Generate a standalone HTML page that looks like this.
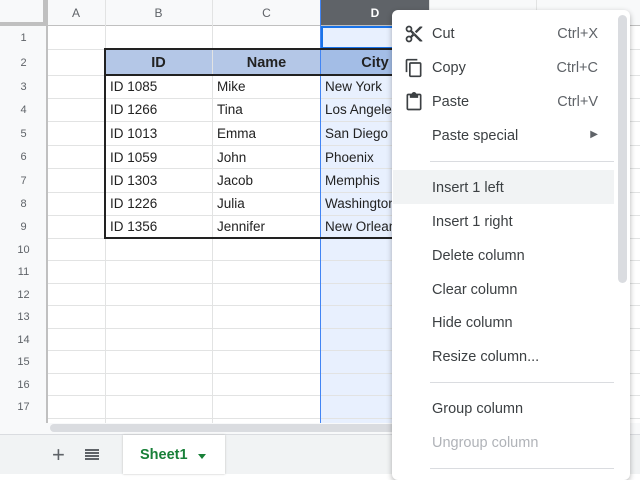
<!DOCTYPE html><html><head><style>
*{margin:0;padding:0;box-sizing:border-box}
body{width:640px;height:474px;overflow:hidden;background:#fff;font-family:"Liberation Sans",Arial,sans-serif;position:relative}
.a{position:absolute}
.hl{position:absolute;left:0;width:640px;height:1px;background:#e2e3e3}
.vl{position:absolute;top:0;width:1px;height:423px;background:#e2e3e3}
.rh{position:absolute;left:0;width:47px;background:#f8f9fa;color:#5f6368;font-size:11px;text-align:center}
.ch{position:absolute;top:0;height:26px;background:#f8f9fa;color:#5f6368;font-size:12px;text-align:center;line-height:26px}
.c{position:absolute;font-size:13.5px;color:#222;white-space:nowrap;overflow:hidden}
.mi{position:absolute;left:432px;font-size:14.5px;color:#3c4043}
.sc{position:absolute;right:42px;font-size:14.5px;color:#5f6368}
</style></head><body>
<div class="a" style="left:321px;top:26px;width:108px;height:397px;background:#e8f0fe"></div>
<div class="a" style="left:105px;top:49px;width:324px;height:26px;background:#b4c7e7"></div>
<div class="a" style="left:321px;top:49px;width:108px;height:26px;background:#a3bde6"></div>
<div class="a" style="left:0;top:0;width:47px;height:26px;background:#f8f9fa;border-right:4px solid #c0c0c0;border-bottom:4px solid #c0c0c0"></div>
<div class="ch" style="left:47px;width:58px">A</div>
<div class="ch" style="left:105px;width:107px">B</div>
<div class="ch" style="left:212px;width:109px">C</div>
<div class="ch" style="left:321px;width:108px;background:#5f6368;color:#fff;font-weight:bold">D</div>
<div class="ch" style="left:429px;width:211px"></div>
<div class="rh" style="top:26px;height:397px;border-right:1px solid #c0c0c0"></div>
<div class="hl" style="top:25px;background:#c0c0c0"></div>
<div class="hl" style="top:49px"></div><div class="hl" style="top:75px"></div><div class="hl" style="top:98px"></div><div class="hl" style="top:121px"></div><div class="hl" style="top:145px"></div><div class="hl" style="top:168px"></div><div class="hl" style="top:192px"></div><div class="hl" style="top:215px"></div><div class="hl" style="top:238px"></div><div class="hl" style="top:260px"></div><div class="hl" style="top:283px"></div><div class="hl" style="top:305px"></div><div class="hl" style="top:328px"></div><div class="hl" style="top:350px"></div><div class="hl" style="top:373px"></div><div class="hl" style="top:395px"></div><div class="hl" style="top:418px"></div>
<div class="vl" style="left:47px;background:#c0c0c0"></div><div class="vl" style="left:105px"></div><div class="vl" style="left:212px"></div><div class="vl" style="left:320px;background:#4285f4"></div><div class="vl" style="left:429px"></div><div class="vl" style="left:536px"></div>
<div class="rh" style="top:27px;line-height:23px">1</div>
<div class="rh" style="top:50px;line-height:26px">2</div>
<div class="rh" style="top:76px;line-height:23px">3</div>
<div class="rh" style="top:99px;line-height:23px">4</div>
<div class="rh" style="top:122px;line-height:24px">5</div>
<div class="rh" style="top:146px;line-height:23px">6</div>
<div class="rh" style="top:169px;line-height:24px">7</div>
<div class="rh" style="top:193px;line-height:23px">8</div>
<div class="rh" style="top:216px;line-height:23px">9</div>
<div class="rh" style="top:239px;line-height:22px">10</div>
<div class="rh" style="top:261px;line-height:23px">11</div>
<div class="rh" style="top:284px;line-height:22px">12</div>
<div class="rh" style="top:306px;line-height:23px">13</div>
<div class="rh" style="top:329px;line-height:22px">14</div>
<div class="rh" style="top:351px;line-height:23px">15</div>
<div class="rh" style="top:374px;line-height:22px">16</div>
<div class="rh" style="top:396px;line-height:23px">17</div>
<div class="a" style="left:0;top:26px;width:47px;height:397px;border-right:1px solid #c0c0c0"></div>
<div class="a" style="left:321px;top:26px;width:108px;height:23px;border:2px solid #1a73e8"></div>
<div class="a" style="left:104px;top:48px;width:330px;height:191px;border:2px solid #222"></div>
<div class="a" style="left:104px;top:74px;width:330px;height:2px;background:#222"></div>
<div class="c" style="left:105px;top:55px;width:107px;text-align:center;font-weight:bold;font-size:14.5px">ID</div>
<div class="c" style="left:212px;top:55px;width:109px;text-align:center;font-weight:bold;font-size:14.5px">Name</div>
<div class="c" style="left:321px;top:55px;width:108px;text-align:center;font-weight:bold;font-size:14.5px">City</div>
<div class="c" style="left:110px;top:79px">ID 1085</div><div class="c" style="left:217px;top:79px">Mike</div><div class="c" style="left:325px;top:79px;width:67px">New York</div>
<div class="c" style="left:110px;top:102px">ID 1266</div><div class="c" style="left:217px;top:102px">Tina</div><div class="c" style="left:325px;top:102px;width:67px">Los Angeles</div>
<div class="c" style="left:110px;top:126px">ID 1013</div><div class="c" style="left:217px;top:126px">Emma</div><div class="c" style="left:325px;top:126px;width:67px">San Diego</div>
<div class="c" style="left:110px;top:150px">ID 1059</div><div class="c" style="left:217px;top:150px">John</div><div class="c" style="left:325px;top:150px;width:67px">Phoenix</div>
<div class="c" style="left:110px;top:173px">ID 1303</div><div class="c" style="left:217px;top:173px">Jacob</div><div class="c" style="left:325px;top:173px;width:67px">Memphis</div>
<div class="c" style="left:110px;top:196px">ID 1226</div><div class="c" style="left:217px;top:196px">Julia</div><div class="c" style="left:325px;top:196px;width:67px">Washington</div>
<div class="c" style="left:110px;top:219px">ID 1356</div><div class="c" style="left:217px;top:219px">Jennifer</div><div class="c" style="left:325px;top:219px;width:67px">New Orleans</div>
<div class="a" style="left:0;top:423px;width:640px;height:11px;background:#f8f9fa"></div>
<div class="a" style="left:50px;top:424px;width:360px;height:8px;border-radius:4px;background:#dadce0"></div>
<div class="a" style="left:0;top:434px;width:640px;height:40px;background:#f1f3f4;border-top:1px solid #dadce0"></div>
<div class="a" style="left:52px;top:442px;font-size:22px;color:#5f6368">+</div>
<div class="a" style="left:85px;top:449px;width:14px;height:11px;background:repeating-linear-gradient(#5f6368 0 2px,transparent 2px 3px)"></div>
<div class="a" style="left:123px;top:435px;width:102px;height:39px;background:#fff;box-shadow:0 0 2px #bbb"></div>
<div class="a" style="left:140px;top:447px;font-size:14.5px;color:#188038;font-weight:bold">Sheet1</div>
<div class="a" style="left:198px;top:454px;border-left:4px solid transparent;border-right:4px solid transparent;border-top:5px solid #188038"></div>
<div class="a" style="left:392px;top:10px;width:238px;height:470px;background:#fff;border-radius:6px;box-shadow:0 2px 6px rgba(0,0,0,.3)"></div>
<div class="a" style="left:618px;top:15px;width:9px;height:268px;border-radius:5px;background:#dadce0"></div>
<div class="a" style="left:393px;top:170px;width:221px;height:34px;background:#f1f3f4"></div>
<div class="a" style="left:430px;top:161px;width:184px;height:1px;background:#dadce0"></div>
<div class="a" style="left:430px;top:382px;width:184px;height:1px;background:#dadce0"></div>
<div class="a" style="left:430px;top:468px;width:184px;height:1px;background:#dadce0"></div>
<svg class="a" style="left:404px;top:24px" width="20" height="20" viewBox="0 0 24 24"><path fill="#3c4043" d="M9.64 7.64c.23-.5.36-1.05.36-1.64 0-2.21-1.790-4-4-4S2 3.79 2 6s1.79 4 4 4c.59 0 1.140-.13 1.64-.36L10 12l-2.36 2.36C7.14 14.13 6.59 14 6 14c-2.21 0-4 1.79-4 4s1.79 4 4 4 4-1.79 4-4c0-.59-.13-1.14-.36-1.64L12 14l7 7h3v-1L9.64 7.64zM6 8c-1.1 0-2-.89-2-2s.9-2 2-2 2 .89 2 2-.9 2-2 2zm0 12c-1.1 0-2-.89-2-2s.9-2 2-2 2 .89 2 2-.9 2-2 2zm6-7.5c-.28 0-.5-.22-.5-.5s.22-.5.5-.5.5.22.5.5-.22.5-.5.5zM19 3l-6 6 2 2 7-7V3z"/></svg>
<svg class="a" style="left:404px;top:58px" width="20" height="20" viewBox="0 0 24 24"><path fill="#3c4043" d="M16 1H4c-1.1 0-2 .9-2 2v14h2V3h12V1zm3 4H8c-1.1 0-2 .9-2 2v14c0 1.1.9 2 2 2h11c1.1 0 2-.9 2-2V7c0-1.1-.9-2-2-2zm0 16H8V7h11v14z"/></svg>
<svg class="a" style="left:404px;top:92px" width="20" height="20" viewBox="0 0 24 24"><path fill="#3c4043" d="M19 2h-4.18C14.4.84 13.3 0 12 0S9.6.84 9.18 2H5c-1.1 0-2 .9-2 2v16c0 1.1.9 2 2 2h14c1.1 0 2-.9 2-2V4c0-1.1-.9-2-2-2zm0 18H5V4h2v3h10V4h2v16z"/></svg>
<div class="mi" style="top:26px">Cut</div><div class="sc" style="top:26px">Ctrl+X</div>
<div class="mi" style="top:60px">Copy</div><div class="sc" style="top:60px">Ctrl+C</div>
<div class="mi" style="top:94px">Paste</div><div class="sc" style="top:94px">Ctrl+V</div>
<div class="mi" style="top:128px">Paste special</div><div class="sc" style="top:129px;font-size:10px">▶</div>
<div class="mi" style="top:180px">Insert 1 left</div>
<div class="mi" style="top:214px">Insert 1 right</div>
<div class="mi" style="top:248px">Delete column</div>
<div class="mi" style="top:282px">Clear column</div>
<div class="mi" style="top:315px">Hide column</div>
<div class="mi" style="top:349px">Resize column...</div>
<div class="mi" style="top:401px">Group column</div>
<div class="mi" style="top:435px;color:#b0b3b8">Ungroup column</div>
</body></html>
